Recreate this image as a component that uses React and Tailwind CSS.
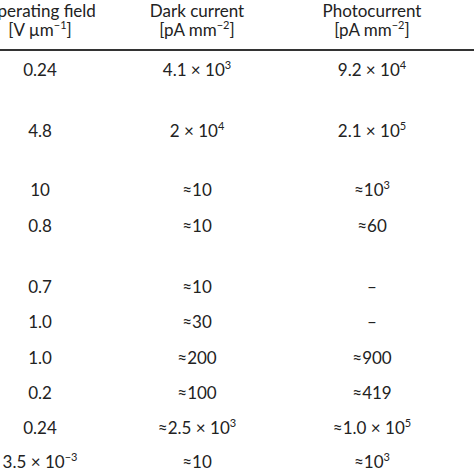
const ROWS = [
  { h: 'h-[61px]', a: '0.24', b: <>4.1 × 10<sup>3</sup></>, c: <>9.2 × 10<sup>4</sup></> },
  { h: 'h-[59px]', a: '4.8', b: <>2 × 10<sup>4</sup></>, c: <>2.1 × 10<sup>5</sup></> },
  { h: 'h-[36px]', a: '10', b: '≈10', c: <>≈10<sup>3</sup></> },
  { h: 'h-[61px]', a: '0.8', b: '≈10', c: '≈60' },
  { h: 'h-[35px]', a: '0.7', b: '≈10', c: '–' },
  { h: 'h-[36px]', a: '1.0', b: '≈30', c: '–' },
  { h: 'h-[35px]', a: '1.0', b: '≈200', c: '≈900' },
  { h: 'h-[35px]', a: '0.2', b: '≈100', c: '≈419' },
  { h: 'h-[34px]', a: '0.24', b: <>≈2.5 × 10<sup>3</sup></>, c: <>≈1.0 × 10<sup>5</sup></> },
  { h: 'h-[22px]', a: <>3.5 × 10<sup>−3</sup></>, b: '≈10', c: <>≈10<sup>3</sup></> },
];

function Cell({ children, w }) {
  return (
    <div className={`${w} flex justify-center whitespace-nowrap`}>
      <span>{children}</span>
    </div>
  );
}

export default function App() {
  return (
    <div className="w-[474px] h-[474px] overflow-hidden bg-white text-[#222] text-[17px] font-['Lato',sans-serif] [&_sup]:text-[11px] [&_sup]:-top-[0.6em]">
      {/* header */}
      <div className="flex leading-[19px] pt-[1px] pb-[10px]">
        <Cell w="w-[80px]">
          <span className="flex flex-col items-center">
            <span>Operating field</span>
            <span>[V µm<sup>−1</sup>]</span>
          </span>
        </Cell>
        <Cell w="w-[234px]">
          <span className="flex flex-col items-center">
            <span>Dark current</span>
            <span>[pA mm<sup>−2</sup>]</span>
          </span>
        </Cell>
        <Cell w="w-[116px]">
          <span className="flex flex-col items-center">
            <span>Photocurrent</span>
            <span>[pA mm<sup>−2</sup>]</span>
          </span>
        </Cell>
      </div>
      <div className="h-[1.5px] bg-[#333]" />

      <div className="pt-[9px] leading-[20px]">
        {ROWS.map((r, i) => (
          <div key={i} className={`flex ${r.h}`}>
            <Cell w="w-[80px]">{r.a}</Cell>
            <Cell w="w-[234px]">{r.b}</Cell>
            <Cell w="w-[116px]">{r.c}</Cell>
          </div>
        ))}
      </div>
    </div>
  );
}
